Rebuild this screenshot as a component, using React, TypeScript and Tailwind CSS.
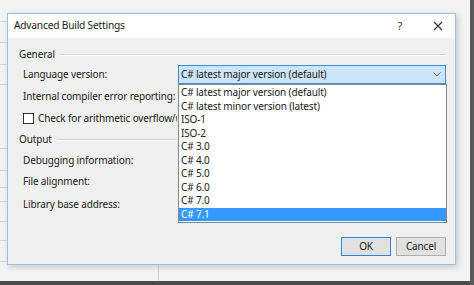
import React from 'react';

const versions = [
  'C# latest major version (default)',
  'C# latest minor version (latest)',
  'ISO-1',
  'ISO-2',
  'C# 3.0',
  'C# 4.0',
  'C# 5.0',
  'C# 6.0',
  'C# 7.0',
  'C# 7.1',
];

const selected = 'C# 7.1';

// faint rows of the property page that sits behind the dialog
const backRows = [22, 21, 22, 20, 64, 22, 17, 14, 20, 19, 21];

function GroupHeader({ label }: { label: string }) {
  return (
    <div className="flex h-[16px] items-center gap-[5px] pl-[11px] pr-[9px]">
      <span>{label}</span>
      <div className="h-px flex-1 bg-[#d5d5d5] shadow-[0_1px_0_#ffffff]" />
    </div>
  );
}

function Row({ label, className = '' }: { label: string; className?: string }) {
  return (
    <div className={`flex h-[20px] items-center pl-[15px] ${className}`}>
      <span className="whitespace-nowrap">{label}</span>
    </div>
  );
}

export default function App() {
  return (
    <div
      className="relative h-[285px] w-[474px] overflow-hidden bg-[#f3f3f3] text-[10px] tracking-[-0.15px] text-[#1b1b1b]"
      style={{ fontFamily: '"Noto Sans", "Open Sans", sans-serif' }}
    >
      {/* page behind the dialog */}
      <div className="flex h-[281px] w-[470px] flex-col">
        {backRows.map((h, i) => (
          <div key={i} className="w-[160px] shrink-0 border-b border-[#dadada]" style={{ height: h }} />
        ))}
        <div className="flex flex-1">
          <div className="w-[159px] border-r border-[#d2d2d2]" />
        </div>
      </div>
      <div className="absolute bottom-0 left-0 h-[4px] w-full bg-[#4b4b4b]" />
      <div className="absolute right-0 top-0 h-full w-[4px] bg-[#5a5a5a]" />

      {/* dialog */}
      <div className="absolute left-[7px] top-[13px] flex h-[252px] w-[449px] flex-col border border-[#9cc0e3] bg-[#f0f0f0] shadow-[2px_2px_6px_rgba(0,0,0,0.18)]">
        <div className="flex h-[24px] shrink-0 items-center bg-white pl-[6px] pr-[12px]">
          <span className="flex-1 text-[10.2px] tracking-[-0.2px]">Advanced Build Settings</span>
          <span className="mr-[31px] text-[11px] text-[#333]">?</span>
          <svg width="10" height="10" viewBox="0 0 10 10" className="text-[#333]">
            <path d="M1 1 L9 9 M9 1 L1 9" stroke="currentColor" strokeWidth="1.1" fill="none" />
          </svg>
        </div>

        <div className="flex flex-1 flex-col pt-[8px]">
          <GroupHeader label="General" />
          <div className="mt-[2px] flex h-[20px] items-center pl-[15px] pr-[9px]">
            <span className="w-[155px] whitespace-nowrap">Language version:</span>
            <div className="flex h-[19px] flex-1 items-center border border-[#3d8fdb] bg-[#cce4f7] pl-[2px] pr-[4px]">
              <span className="flex-1 whitespace-nowrap">C# latest major version (default)</span>
              <svg width="8" height="5" viewBox="0 0 8 5">
                <path d="M0.5 0.5 L4 4 L7.5 0.5" stroke="#6a6a6a" strokeWidth="1" fill="none" />
              </svg>
            </div>
          </div>
          <Row label="Internal compiler error reporting:" className="mt-[2px]" />
          <div className="mt-[2px] flex h-[20px] items-center pl-[15px]">
            <div className="mr-[4px] h-[11px] w-[11px] shrink-0 border border-[#333] bg-white" />
            <span className="w-[139px] overflow-hidden whitespace-nowrap">
              Check for arithmetic overflow/underflow
            </span>
          </div>
          <div className="mt-[3px]">
            <GroupHeader label="Output" />
          </div>
          <Row label="Debugging information:" className="mt-[3px]" />
          <Row label="File alignment:" className="mt-[1px]" />
          <Row label="Library base address:" className="mt-[3px]" />

          <div className="mt-auto flex justify-end gap-[5px] pb-[8px] pr-[9px]">
            <button className="h-[19px] w-[50px] border border-[#2f84d6] bg-[#e1e1e1] shadow-[inset_0_0_0_1px_#e1e1e1]">
              OK
            </button>
            <button className="h-[19px] w-[50px] border border-[#adadad] bg-[#e1e1e1]">Cancel</button>
          </div>
        </div>

        {/* open drop-down list */}
        <ul className="absolute left-[170px] top-[70px] flex w-[269px] flex-col border border-[#828790] bg-white py-px">
          {versions.map((v) => (
            <li
              key={v}
              className={`flex h-[13.5px] items-center whitespace-nowrap pl-[2px] ${
                v === selected ? 'bg-[#3399ff] text-white' : ''
              }`}
            >
              {v}
            </li>
          ))}
        </ul>
      </div>
    </div>
  );
}
